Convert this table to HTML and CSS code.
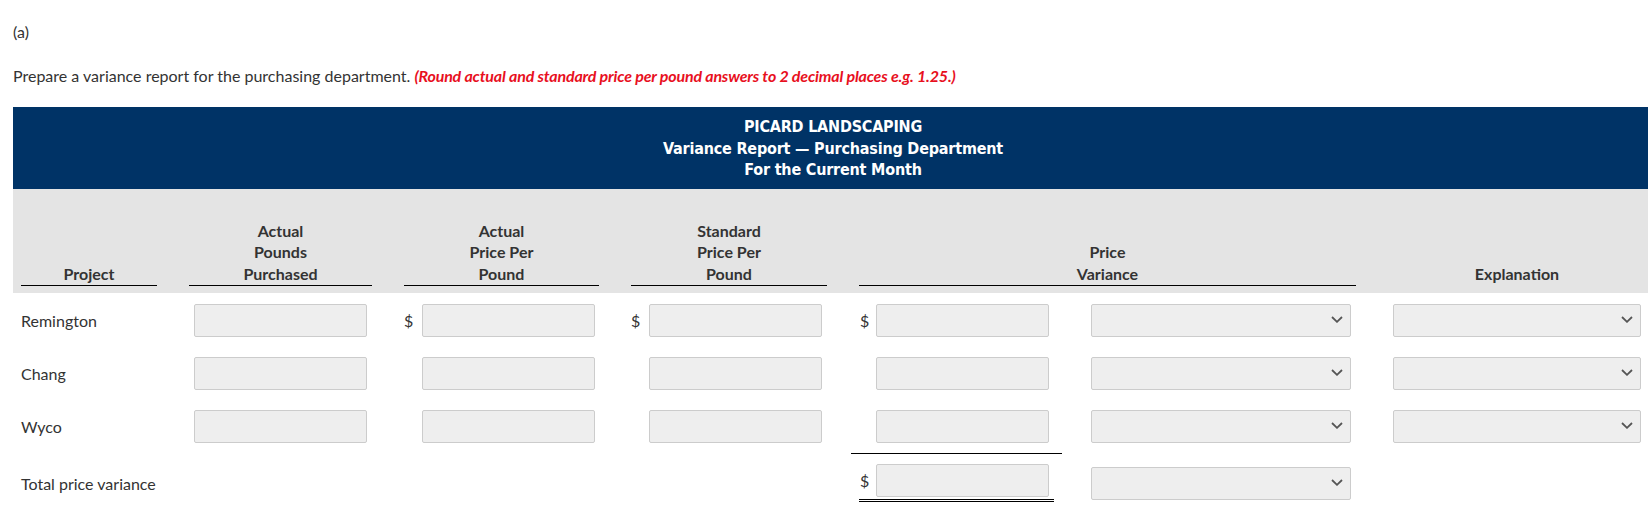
FILE: index.html
```html
<!DOCTYPE html>
<html lang="en">
<head>
<meta charset="utf-8">
<title>Variance Report</title>
<link rel="stylesheet" href="styles.css">
</head>
<body>
<div class="page">
  <p class="part">(a)</p>
  <p class="instr">Prepare a variance report for the purchasing department. <em class="note">(Round actual and standard price per pound answers to 2 decimal places e.g. 1.25.)</em></p>

  <div class="report">
    <div class="title">
      <div>PICARD LANDSCAPING</div>
      <div>Variance Report — Purchasing Department</div>
      <div>For the Current Month</div>
    </div>

    <div class="grid head">
      <div class="hcell">Project</div>
      <div class="hcell">Actual<br>Pounds<br>Purchased</div>
      <div class="hcell">Actual<br>Price Per<br>Pound</div>
      <div class="hcell">Standard<br>Price Per<br>Pound</div>
      <div class="hcell span2">Price<br>Variance</div>
      <div class="hcell noline">Explanation</div>
    </div>

    <div class="grid row first">
      <div class="label">Remington</div>
      <div class="cell center"><input class="box" type="text"></div>
      <div class="cell money"><span class="cur">$</span><input class="box" type="text"></div>
      <div class="cell money"><span class="cur">$</span><input class="box" type="text"></div>
      <div class="cell money pv"><span class="cur">$</span><input class="box" type="text"></div>
      <div class="cell"><span class="sel"><select><option></option></select><svg width="12" height="7" viewBox="0 0 12 7"><polyline points="1,1 6,5.8 11,1" fill="none" stroke="#555" stroke-width="1.8"/></svg></span></div>
      <div class="cell"><span class="sel wide"><select><option></option></select><svg width="12" height="7" viewBox="0 0 12 7"><polyline points="1,1 6,5.8 11,1" fill="none" stroke="#555" stroke-width="1.8"/></svg></span></div>
    </div>

    <div class="grid row">
      <div class="label">Chang</div>
      <div class="cell center"><input class="box" type="text"></div>
      <div class="cell money"><span class="cur"></span><input class="box" type="text"></div>
      <div class="cell money"><span class="cur"></span><input class="box" type="text"></div>
      <div class="cell money pv"><span class="cur"></span><input class="box" type="text"></div>
      <div class="cell"><span class="sel"><select><option></option></select><svg width="12" height="7" viewBox="0 0 12 7"><polyline points="1,1 6,5.8 11,1" fill="none" stroke="#555" stroke-width="1.8"/></svg></span></div>
      <div class="cell"><span class="sel wide"><select><option></option></select><svg width="12" height="7" viewBox="0 0 12 7"><polyline points="1,1 6,5.8 11,1" fill="none" stroke="#555" stroke-width="1.8"/></svg></span></div>
    </div>

    <div class="grid row">
      <div class="label">Wyco</div>
      <div class="cell center"><input class="box" type="text"></div>
      <div class="cell money"><span class="cur"></span><input class="box" type="text"></div>
      <div class="cell money"><span class="cur"></span><input class="box" type="text"></div>
      <div class="cell money pv"><span class="cur"></span><input class="box" type="text"></div>
      <div class="cell"><span class="sel"><select><option></option></select><svg width="12" height="7" viewBox="0 0 12 7"><polyline points="1,1 6,5.8 11,1" fill="none" stroke="#555" stroke-width="1.8"/></svg></span></div>
      <div class="cell"><span class="sel wide"><select><option></option></select><svg width="12" height="7" viewBox="0 0 12 7"><polyline points="1,1 6,5.8 11,1" fill="none" stroke="#555" stroke-width="1.8"/></svg></span></div>
    </div>

    <div class="grid rule">
      <div class="sumline"></div>
    </div>

    <div class="grid row total">
      <div class="label tlabel">Total price variance</div>
      <div class="cell money pv dbl"><span class="cur">$</span><input class="box" type="text"></div>
      <div class="cell"><span class="sel"><select><option></option></select><svg width="12" height="7" viewBox="0 0 12 7"><polyline points="1,1 6,5.8 11,1" fill="none" stroke="#555" stroke-width="1.8"/></svg></span></div>
    </div>
  </div>
</div>
</body>
</html>
```

FILE: styles.css
```css
html, body {
  margin: 0;
  padding: 0;
  background: #ffffff;
}

body {
  font-family: Lato, "Open Sans", sans-serif;
  font-size: 16px;
  color: #333333;
}

.page {
  padding: 22px 0 0 13px;
}

.part {
  margin: 0;
  line-height: 19px;
}

.instr {
  margin: 25px 0 0 0;
  line-height: 19px;
}

.note {
  color: #e8101e;
  font-weight: bold;
  font-style: italic;
  letter-spacing: -0.17px;
}

.report {
  margin-top: 22px;
}

.title {
  background: #003366;
  color: #ffffff;
  font-family: "DejaVu Sans Condensed", "DejaVu Sans", sans-serif;
  font-stretch: condensed;
  font-weight: bold;
  font-size: 16px;
  letter-spacing: -0.2px;
  line-height: 21.5px;
  text-align: center;
  height: 82px;
  box-sizing: border-box;
  padding: 9px 0 0 5px;
}

.grid {
  display: grid;
  grid-template-columns: 136px 183px 195px 196px 200px 270px 248px;
  column-gap: 32px;
  padding-left: 8px;
}

.head {
  background: #e4e4e4;
  height: 104px;
  box-sizing: border-box;
  padding-bottom: 7px;
  align-items: end;
}

.hcell {
  text-align: center;
  font-weight: bold;
  line-height: 21.5px;
  border-bottom: 1px solid #000000;
  padding-bottom: 1px;
}

.span2 {
  grid-column: 5 / 7;
  margin-right: 5px;
}

.noline {
  border-bottom-color: transparent;
}

.row {
  height: 33px;
  margin-top: 20px;
  align-items: center;
}

.row.first {
  margin-top: 11px;
}

.label {
  white-space: nowrap;
  line-height: 19px;
}

.tlabel {
  grid-column: 1 / 5;
}

.cell {
  display: flex;
  align-items: center;
}

.center {
  justify-content: center;
}

.cur {
  display: inline-block;
  width: 18px;
  flex: none;
  line-height: 19px;
}

.pv .cur {
  width: 17px;
  padding-left: 1px;
  box-sizing: border-box;
}

.box {
  flex: none;
  width: 173px;
  height: 33px;
  box-sizing: border-box;
  margin: 0;
  background: #eeeeee;
  border: 1px solid #cccccc;
  border-radius: 2px;
  padding: 0 6px;
  font: 16px Lato, sans-serif;
}

.sel {
  position: relative;
  display: block;
  width: 260px;
  height: 33px;
}

.sel.wide {
  width: 248px;
}

.sel select {
  appearance: none;
  -webkit-appearance: none;
  display: block;
  width: 100%;
  height: 33px;
  margin: 0;
  background: #eeeeee;
  border: 1px solid #cccccc;
  border-radius: 2px;
  font: 16px Lato, sans-serif;
}

.sel svg {
  position: absolute;
  right: 8px;
  top: 12px;
  pointer-events: none;
}

.rule {
  height: 1px;
  margin-top: 10px;
}

.sumline {
  grid-column: 5;
  margin-left: -8px;
  width: 211px;
  border-top: 1px solid #000000;
}

.total {
  height: 38px;
  margin-top: 10px;
}

.dbl {
  grid-column: 5;
  align-self: start;
  width: 195px;
  padding-bottom: 2px;
  border-bottom: 3px double #000000;
}
```
